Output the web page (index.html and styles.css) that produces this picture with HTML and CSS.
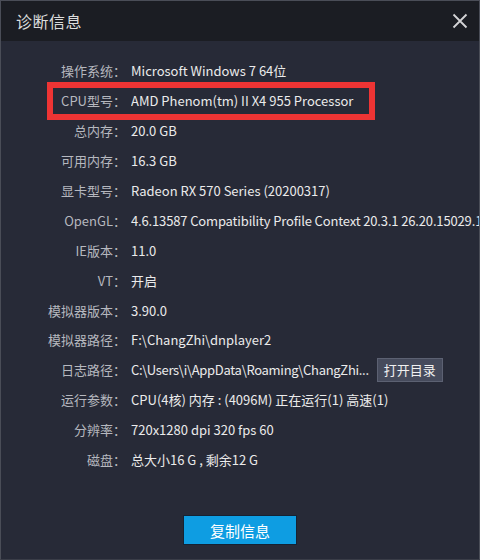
FILE: index.html
```html
<!DOCTYPE html>
<html lang="zh-CN">
<head>
    <meta charset="UTF-8">
    <meta name="viewport" content="width=device-width, initial-scale=1.0">
    <title>诊断信息</title>
    <link rel="stylesheet" href="styles.css">
</head>
<body>

    <div class="dialog">
        <div class="title-bar">
            <span class="title">诊断信息</span>
            <button type="button" class="close-btn" aria-label="关闭">
                <svg width="16" height="16" viewBox="0 0 16 16">
                    <path d="M1.5 1.5 L14.5 14.5 M14.5 1.5 L1.5 14.5" stroke="#d4d4d6" stroke-width="1.8" fill="none"/>
                </svg>
            </button>
        </div>

        <div class="info-list">
            <div class="row"><span class="label">操作系统：</span><span class="value">Microsoft Windows 7 64位</span></div>
            <div class="row marked"><span class="label">CPU型号：</span><span class="value">AMD Phenom(tm) II X4 955 Processor</span></div>
            <div class="row"><span class="label">总内存：</span><span class="value">20.0 GB</span></div>
            <div class="row"><span class="label">可用内存：</span><span class="value">16.3 GB</span></div>
            <div class="row"><span class="label">显卡型号：</span><span class="value">Radeon RX 570 Series (20200317)</span></div>
            <div class="row"><span class="label">OpenGL：</span><span class="value tight">4.6.13587 Compatibility Profile Context 20.3.1 26.20.15029.15</span></div>
            <div class="row"><span class="label">IE版本：</span><span class="value">11.0</span></div>
            <div class="row"><span class="label">VT：</span><span class="value">开启</span></div>
            <div class="row"><span class="label">模拟器版本：</span><span class="value">3.90.0</span></div>
            <div class="row"><span class="label">模拟器路径：</span><span class="value">F:\ChangZhi\dnplayer2</span></div>
            <div class="row">
                <span class="label">日志路径：</span>
                <span class="value with-action">
                    <span class="path">C:\Users\i\AppData\Roaming\ChangZhi...</span>
                    <button type="button" class="open-btn">打开目录</button>
                </span>
            </div>
            <div class="row"><span class="label">运行参数：</span><span class="value">CPU(4核) 内存 : (4096M) 正在运行(1) 高速(1)</span></div>
            <div class="row"><span class="label">分辨率：</span><span class="value">720x1280 dpi 320 fps 60</span></div>
            <div class="row"><span class="label">磁盘：</span><span class="value">总大小16 G , 剩余12 G</span></div>
        </div>

        <div class="footer">
            <button type="button" class="copy-btn">复制信息</button>
        </div>
    </div>

</body>
</html>
```

FILE: styles.css
```css
body {
    margin: 0;
    background: #272a37;
    font-family: "Noto Sans CJK SC", "Noto Sans", sans-serif;
}

.dialog {
    width: 480px;
    height: 560px;
    box-sizing: border-box;
    border: 1px solid #4a4d57;
    border-bottom-color: #3a3d48;
    background: #272a37;
    display: flex;
    flex-direction: column;
    overflow: hidden;
}

/* Title bar */
.title-bar {
    height: 40px;
    background: #1b1d23;
    display: flex;
    align-items: center;
    justify-content: space-between;
    padding: 0 11px 0 15px;
    flex-shrink: 0;
}

.title {
    font-size: 16px;
    color: #dcdcdc;
    letter-spacing: 0.5px;
}

.close-btn {
    background: none;
    border: none;
    padding: 0;
    width: 16px;
    height: 16px;
    cursor: pointer;
    display: flex;
}

/* Info rows */
.info-list {
    padding-top: 15px;
    font-size: 13px;
}

.row {
    display: grid;
    grid-template-columns: 125px 1fr;
    column-gap: 5px;
    align-items: center;
    height: 29.9px;
    position: relative;
}

.label {
    text-align: right;
    color: #b6b8bf;
    white-space: nowrap;
}

.value {
    color: #ebebeb;
    white-space: nowrap;
    overflow: hidden;
}

.value.tight {
    letter-spacing: -0.15px;
}

.with-action {
    display: flex;
    align-items: center;
    gap: 8px;
}

.path {
    letter-spacing: -0.3px;
}

.row.marked::after {
    content: "";
    position: absolute;
    left: 46px;
    top: -4px;
    width: 316px;
    height: 26px;
    border: 6px solid #ee3434;
    pointer-events: none;
}

.open-btn {
    font-family: inherit;
    font-size: 13px;
    color: #f0f0f0;
    background: #464b5c;
    border: 1px solid #5c6172;
    height: 24px;
    padding: 0 6px;
    cursor: pointer;
}

/* Footer */
.footer {
    margin-top: auto;
    padding-bottom: 14px;
    display: flex;
    justify-content: center;
}

.copy-btn {
    width: 114px;
    height: 30px;
    background: #0e9de2;
    border: 1px solid #152233;
    color: #ffffff;
    font-family: inherit;
    font-size: 15px;
    cursor: pointer;
}
```
